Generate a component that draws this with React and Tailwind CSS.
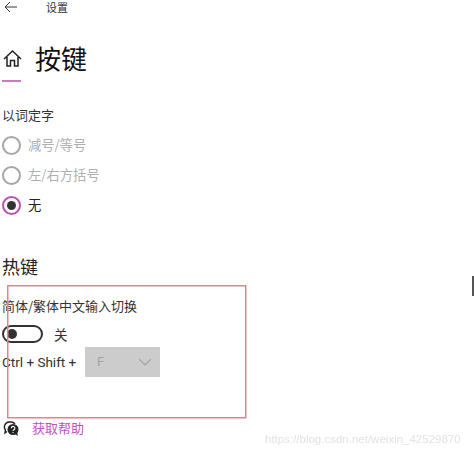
import React from 'react';

const cjk = "font-['Noto_Sans_CJK_SC','Liberation_Sans',sans-serif]";

function Radio({ label, checked }) {
  return (
    <div className="flex items-center h-[30px]">
      <span
        className={
          'flex items-center justify-center w-[19px] h-[19px] rounded-full border-2 ' +
          (checked ? 'border-[#c04fb4]' : 'border-[#a6a6a6]')
        }
      >
        {checked && <span className="w-[9px] h-[9px] rounded-full bg-[#333333]" />}
      </span>
      <span className={'ml-[7px] text-[13.3px] ' + (checked ? 'text-[#222222]' : 'text-[#b0b0b0]')}>{label}</span>
    </div>
  );
}

export default function App() {
  return (
    <div className={'relative w-[474px] h-[452px] overflow-hidden bg-white pl-[2px] ' + cjk}>
      {/* top bar */}
      <div className="flex items-center h-[14px]">
        <svg width="14" height="12" viewBox="0 0 14 12" fill="none" stroke="#333" strokeWidth="1" className="ml-[2px]">
          <path d="M13 6H1M6 1L1 6l5 5" />
        </svg>
        <span className="ml-[28px] text-[11px] leading-[14px] text-[#333333]">设置</span>
      </div>

      {/* title */}
      <div className="flex items-center mt-[26px] h-[36px]">
        <svg width="19" height="18" viewBox="0 0 19 18" fill="none" stroke="#222" strokeWidth="1.5" className="ml-[1px]">
          <path d="M1 10L9.5 2 18 10M4 8v9h3.5v-5.5h4V17H15V8" />
        </svg>
        <h1 className="ml-[13px] text-[26px] leading-none text-[#111111]">按键</h1>
      </div>
      <div className="mt-[4px] w-[19px] h-[2px] bg-[#c77cc0]" />

      {/* word lock options */}
      <p className="mt-[23px] text-[13px] leading-[20px] text-[#333333]">以词定字</p>
      <div className="mt-[5px] flex flex-col">
        <Radio label="减号/等号" />
        <Radio label="左/右方括号" />
        <Radio label="无" checked />
      </div>

      {/* hotkeys */}
      <h2 className="mt-[33px] text-[18px] leading-[26px] text-[#222222]">热键</h2>
      <p className="mt-[17px] text-[13px] leading-[20px] text-[#333333]">简体/繁体中文输入切换</p>
      <div className="mt-[8px] flex items-center h-[20px]">
        <span className="flex items-center w-[41px] h-[18px] rounded-full border-2 border-[#333333] pl-[3px]">
          <span className="w-[10px] h-[10px] rounded-full bg-[#333333]" />
        </span>
        <span className="ml-[11px] text-[13.5px] text-[#333333]">关</span>
      </div>
      <div className="mt-[3px] flex items-center h-[30px]">
        <span className="w-[83px] text-[13.5px] font-['Roboto',sans-serif] text-[#333333] whitespace-nowrap">Ctrl + Shift +</span>
        <div className="flex items-center justify-between w-[75px] h-[30px] bg-[#cccccc] pl-[12px] pr-[8px]">
          <span className="text-[13px] text-[#a3a3a3] font-['Roboto',sans-serif]">F</span>
          <svg width="14" height="8" viewBox="0 0 14 8" fill="none" stroke="#a3a3a3" strokeWidth="1.2">
            <path d="M1 1l6 6 6-6" />
          </svg>
        </div>
      </div>

      {/* help link */}
      <div className="mt-[41px] flex items-center h-[20px]">
        <svg width="16" height="15" viewBox="0 0 16 15" className="ml-[1px]">
          <path d="M4 10.5L2 12l.4-3A5 5 0 0 1 6 1h2a5 5 0 0 1 4 2" fill="none" stroke="#222" strokeWidth="1.4" />
          <circle cx="10" cy="8.5" r="5.5" fill="#222" />
          <path d="M12 13l3 2-1-4z" fill="#222" />
          <path d="M8.3 7.2a1.8 1.8 0 1 1 2.6 1.6c-.6.3-.9.6-.9 1.2" fill="none" stroke="#fff" strokeWidth="1.1" />
          <circle cx="10" cy="11.6" r="0.7" fill="#fff" />
        </svg>
        <a className="ml-[13px] text-[13px] text-[#c04fc0]">获取帮助</a>
      </div>

      {/* pasted annotation and screenshot leftovers */}
      <svg width="240" height="134" className="absolute left-[7px] top-[285px]">
        <rect x="0.75" y="0.75" width="238" height="132" fill="none" stroke="#e8818d" strokeWidth="1.5" />
      </svg>
      <div className="absolute right-0 top-[276px] w-[2px] h-[20px] bg-[#555555] blur-[0.5px]" />
      <span className="absolute left-[265px] top-[431px] text-[11.5px] leading-[16px] text-[#e2e2e2] font-['Liberation_Sans',sans-serif] whitespace-nowrap blur-[0.3px]">
        https://blog.csdn.net/weixin_42529870
      </span>
    </div>
  );
}
